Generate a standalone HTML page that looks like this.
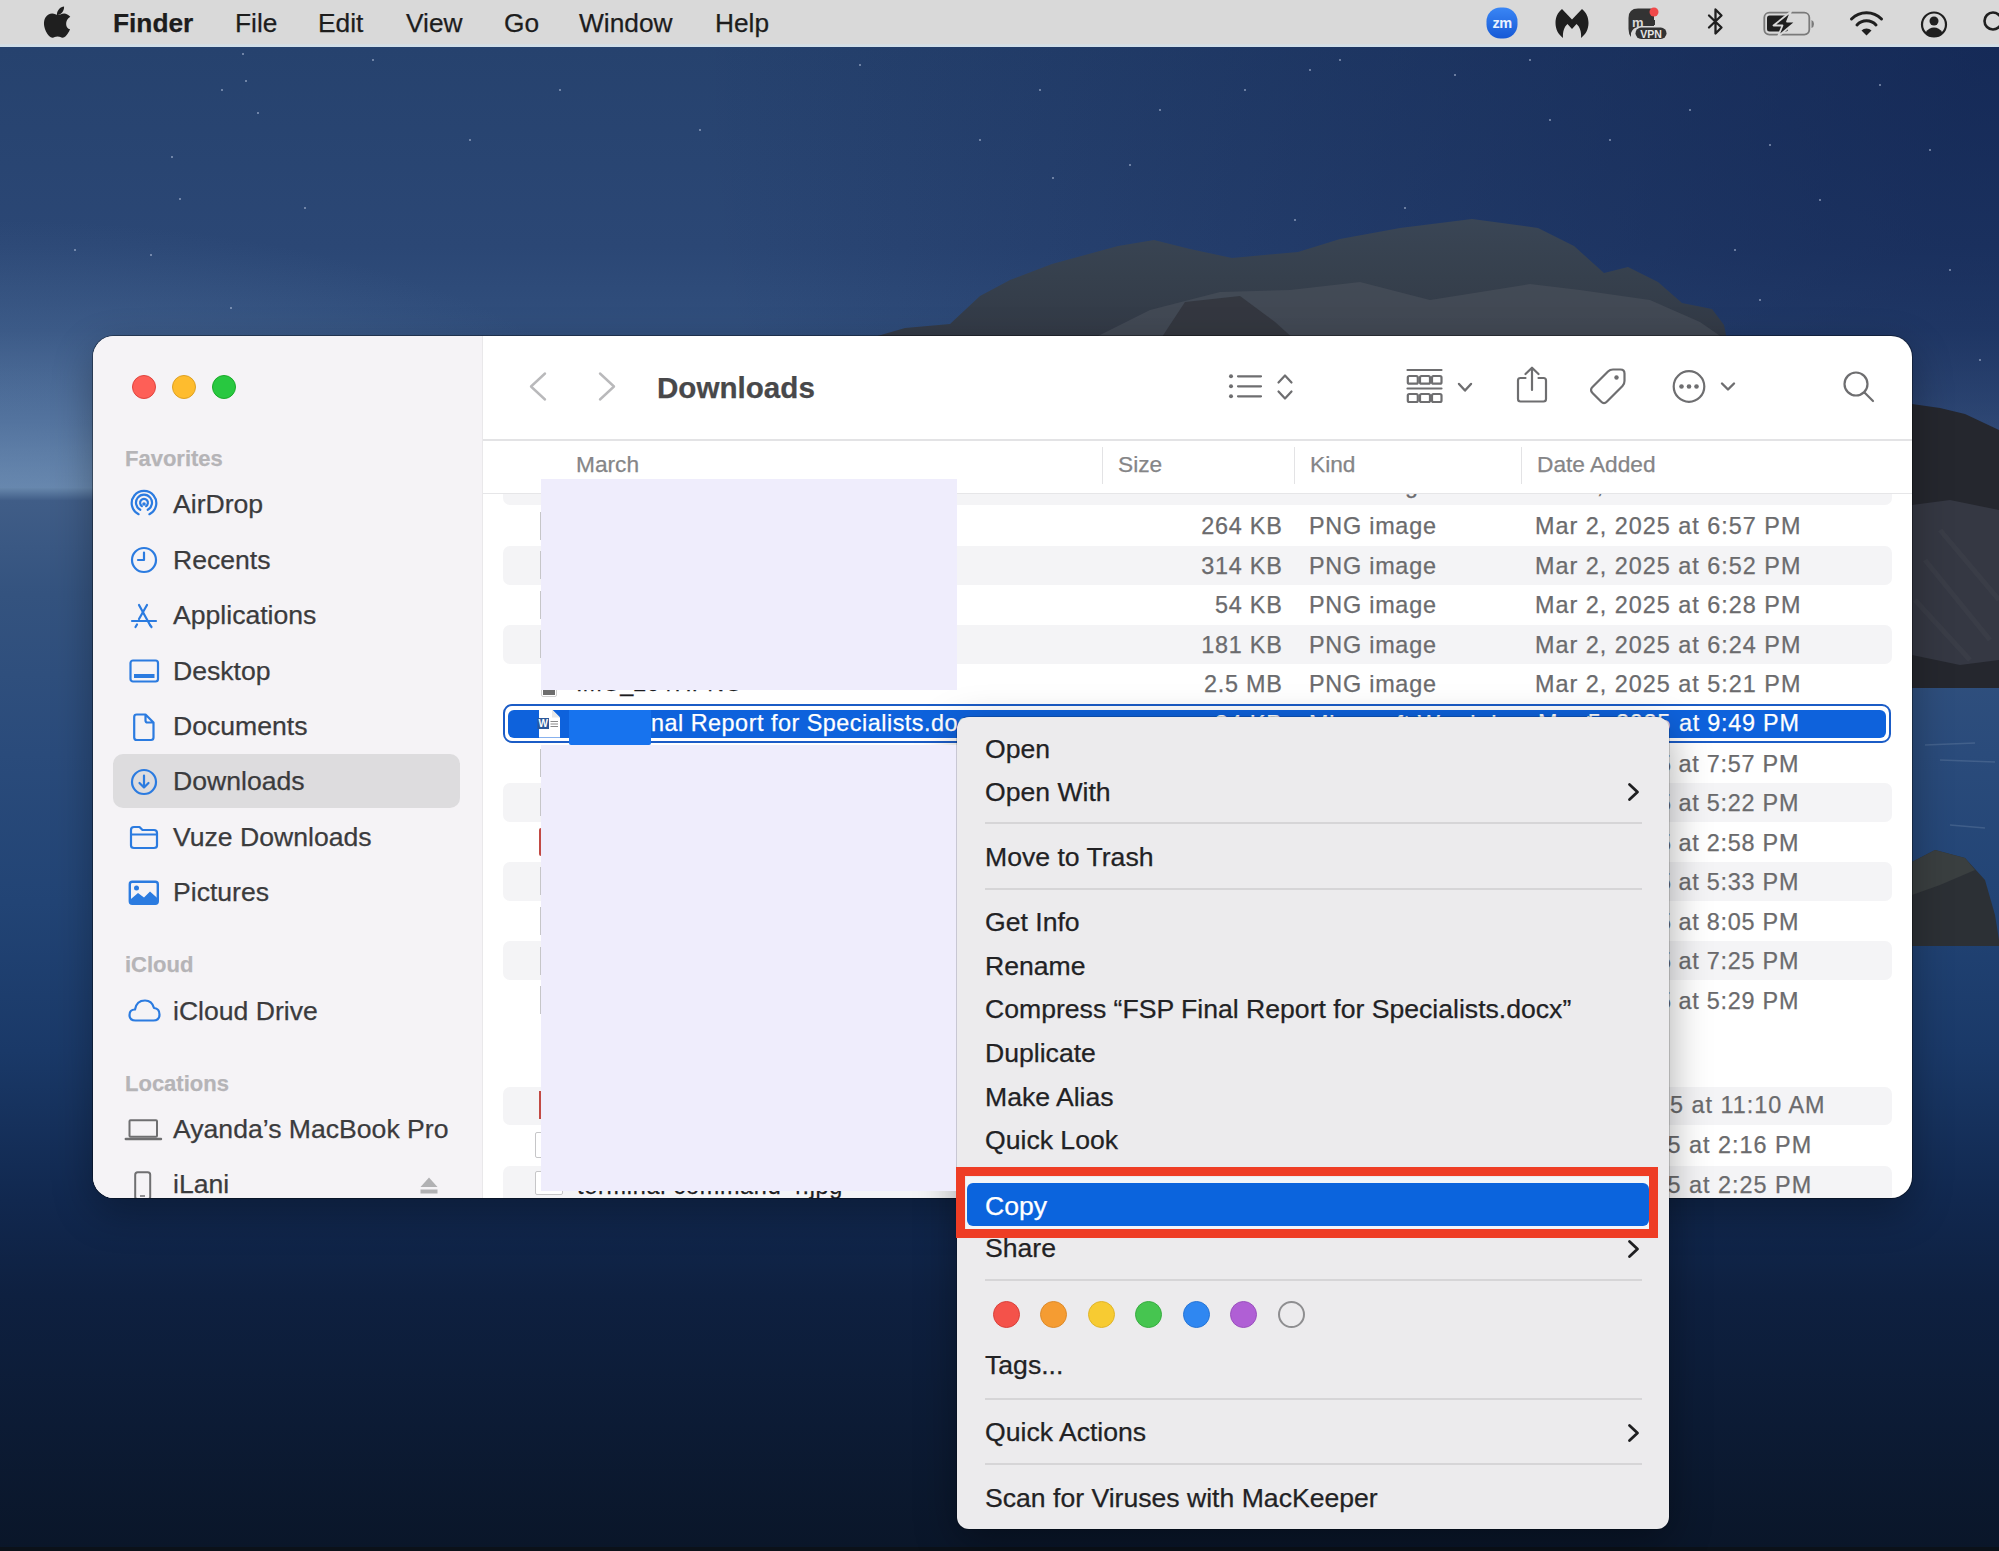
<!DOCTYPE html><html><head><meta charset="utf-8"><style>html,body{margin:0;padding:0}body{width:1999px;height:1551px;overflow:hidden;position:relative;font-family:"Liberation Sans", sans-serif}div{-webkit-text-stroke:0.25px currentColor}</style></head><body>
<svg width="1999" height="1551" style="position:absolute;left:0;top:0">
<defs>
<linearGradient id="sky" x1="0" y1="47" x2="0" y2="490" gradientUnits="userSpaceOnUse">
<stop offset="0" stop-color="#26426e"/><stop offset="0.45" stop-color="#2b4775"/><stop offset="0.64" stop-color="#314f7d"/>
<stop offset="0.85" stop-color="#486894"/><stop offset="1" stop-color="#6686ab"/></linearGradient>
<radialGradient id="skyL" cx="0" cy="480" r="650" gradientUnits="userSpaceOnUse" gradientTransform="translate(0,480) scale(1,0.4) translate(0,-480)"><stop offset="0" stop-color="#6a8ab3" stop-opacity="0.45"/><stop offset="1" stop-color="#6a8ab3" stop-opacity="0"/></radialGradient>
<radialGradient id="skyDark" cx="1999" cy="47" r="1300" gradientUnits="userSpaceOnUse">
<stop offset="0" stop-color="#0a1a48" stop-opacity="0.6"/><stop offset="0.6" stop-color="#0a1a48" stop-opacity="0.25"/><stop offset="1" stop-color="#0a1a48" stop-opacity="0"/></radialGradient>
<linearGradient id="sea" x1="0" y1="488" x2="0" y2="1551" gradientUnits="userSpaceOnUse">
<stop offset="0" stop-color="#6686ab"/><stop offset="0.012" stop-color="#405d87"/><stop offset="0.1" stop-color="#34537f"/>
<stop offset="0.25" stop-color="#2a4b7b"/><stop offset="0.39" stop-color="#224475"/><stop offset="0.53" stop-color="#1a3968"/>
<stop offset="0.67" stop-color="#11284f"/><stop offset="0.76" stop-color="#0e2040"/><stop offset="1" stop-color="#0a1629"/></linearGradient>
<linearGradient id="mtn" x1="0" y1="215" x2="0" y2="340" gradientUnits="userSpaceOnUse">
<stop offset="0" stop-color="#3a4656"/><stop offset="0.5" stop-color="#36404d"/><stop offset="1" stop-color="#323945"/></linearGradient>
<linearGradient id="cliff" x1="0" y1="403" x2="0" y2="690" gradientUnits="userSpaceOnUse">
<stop offset="0" stop-color="#2a2d35"/><stop offset="0.5" stop-color="#363942"/><stop offset="1" stop-color="#26282e"/></linearGradient>
</defs>
<rect x="0" y="0" width="1999" height="490" fill="url(#sky)"/>
<rect x="0" y="0" width="1999" height="490" fill="url(#skyDark)"/>
<rect x="0" y="0" width="1999" height="490" fill="url(#skyL)"/>
<rect x="0" y="488" width="1999" height="1063" fill="url(#sea)"/>
<rect x="0" y="1547" width="1999" height="4" fill="#0b1119"/>
<circle cx="243" cy="54" r="1" fill="#c8d4ea" opacity="0.6"/><circle cx="222" cy="90" r="1" fill="#c8d4ea" opacity="0.6"/><circle cx="246" cy="81" r="1" fill="#c8d4ea" opacity="0.6"/><circle cx="258" cy="113" r="1" fill="#c8d4ea" opacity="0.6"/><circle cx="172" cy="157" r="1" fill="#c8d4ea" opacity="0.6"/><circle cx="180" cy="199" r="1" fill="#c8d4ea" opacity="0.6"/><circle cx="75" cy="250" r="1" fill="#c8d4ea" opacity="0.6"/><circle cx="151" cy="255" r="1" fill="#c8d4ea" opacity="0.6"/><circle cx="373" cy="60" r="1" fill="#c8d4ea" opacity="0.6"/><circle cx="305" cy="208" r="1" fill="#c8d4ea" opacity="0.6"/><circle cx="231" cy="308" r="1" fill="#c8d4ea" opacity="0.6"/><circle cx="1053" cy="178" r="1" fill="#c8d4ea" opacity="0.6"/><circle cx="1160" cy="110" r="1" fill="#c8d4ea" opacity="0.6"/><circle cx="1245" cy="90" r="1" fill="#c8d4ea" opacity="0.6"/><circle cx="1310" cy="70" r="1" fill="#c8d4ea" opacity="0.6"/><circle cx="1455" cy="75" r="1" fill="#c8d4ea" opacity="0.6"/><circle cx="1550" cy="120" r="1" fill="#c8d4ea" opacity="0.6"/><circle cx="1610" cy="140" r="1" fill="#c8d4ea" opacity="0.6"/><circle cx="1690" cy="110" r="1" fill="#c8d4ea" opacity="0.6"/><circle cx="1770" cy="145" r="1" fill="#c8d4ea" opacity="0.6"/><circle cx="1880" cy="85" r="1" fill="#c8d4ea" opacity="0.6"/><circle cx="1930" cy="150" r="1" fill="#c8d4ea" opacity="0.6"/><circle cx="1950" cy="270" r="1" fill="#c8d4ea" opacity="0.6"/><circle cx="1820" cy="200" r="1" fill="#c8d4ea" opacity="0.6"/><circle cx="1735" cy="250" r="1" fill="#c8d4ea" opacity="0.6"/><circle cx="1405" cy="208" r="1" fill="#c8d4ea" opacity="0.6"/><circle cx="1295" cy="220" r="1" fill="#c8d4ea" opacity="0.6"/><circle cx="1340" cy="60" r="1" fill="#c8d4ea" opacity="0.6"/><circle cx="1040" cy="90" r="1" fill="#c8d4ea" opacity="0.6"/><circle cx="980" cy="140" r="1" fill="#c8d4ea" opacity="0.6"/><circle cx="1130" cy="165" r="1" fill="#c8d4ea" opacity="0.6"/><circle cx="1760" cy="300" r="1" fill="#c8d4ea" opacity="0.6"/><circle cx="1980" cy="360" r="1" fill="#c8d4ea" opacity="0.6"/><circle cx="1530" cy="60" r="1" fill="#c8d4ea" opacity="0.6"/><circle cx="860" cy="65" r="1" fill="#c8d4ea" opacity="0.6"/><circle cx="700" cy="130" r="1" fill="#c8d4ea" opacity="0.6"/><circle cx="560" cy="90" r="1" fill="#c8d4ea" opacity="0.6"/><circle cx="470" cy="140" r="1" fill="#c8d4ea" opacity="0.6"/>
<path d="M874,337 L905,328 L950,324 L980,296 L1010,280 L1052,264 L1118,246 L1154,240 L1190,249 L1232,258 L1298,252 L1340,239 L1400,228 L1472,219 L1538,228 L1574,246 L1604,273 L1628,267 L1658,282 L1682,303 L1712,309 L1724,325 L1727,340 Z" fill="url(#mtn)"/>
<path d="M1090,340 L1150,310 L1220,292 L1290,290 L1360,282 L1430,300 L1530,284 L1580,290 L1650,300 L1700,322 L1726,340 Z" fill="#4f565f" opacity="0.5"/>
<path d="M1160,340 L1185,302 L1240,296 L1275,322 L1295,340 Z" fill="#25262c" opacity="0.5"/>
<path d="M1912,404 L1940,408 L1965,414 L1999,430 L1999,688 L1912,688 Z" fill="#25272e"/>
<path d="M1912,505 L1950,500 L1999,510 L1999,660 L1960,665 L1912,655 Z" fill="#353843"/>
<path d="M1925,560 L1990,640 M1915,600 L1970,660 M1940,530 L1999,600" stroke="#41444e" stroke-width="5" opacity="0.45"/>
<path d="M1925,745 L1975,743 M1940,760 L1995,762 M1950,825 L1985,828" stroke="#6f88aa" stroke-width="1.5" opacity="0.35"/>
<path d="M1912,862 L1935,850 L1965,858 L1985,880 L1995,915 L1999,940 L1999,946 L1912,946 Z" fill="#2c3035"/>
<path d="M1912,862 L1935,850 L1965,858 L1975,870 L1940,885 L1912,895 Z" fill="#3a3f40"/>
</svg>
<div style="position:absolute;left:0px;top:0px;width:1999px;height:44px;background:#d9d9d9"></div>
<div style="position:absolute;left:0px;top:44px;width:1999px;height:3px;background:linear-gradient(#d6dde2,#cfdfea)"></div>
<div style="position:absolute;left:113.0px;top:10.2px;font-size:26.3px;line-height:26.3px;color:#1d1d1d;font-weight:700;white-space:nowrap;">Finder</div>
<div style="position:absolute;left:235.0px;top:10.2px;font-size:26.3px;line-height:26.3px;color:#1d1d1d;font-weight:400;white-space:nowrap;">File</div>
<div style="position:absolute;left:318.0px;top:10.2px;font-size:26.3px;line-height:26.3px;color:#1d1d1d;font-weight:400;white-space:nowrap;">Edit</div>
<div style="position:absolute;left:406.0px;top:10.2px;font-size:26.3px;line-height:26.3px;color:#1d1d1d;font-weight:400;white-space:nowrap;">View</div>
<div style="position:absolute;left:504.0px;top:10.2px;font-size:26.3px;line-height:26.3px;color:#1d1d1d;font-weight:400;white-space:nowrap;">Go</div>
<div style="position:absolute;left:579.0px;top:10.2px;font-size:26.3px;line-height:26.3px;color:#1d1d1d;font-weight:400;white-space:nowrap;">Window</div>
<div style="position:absolute;left:715.0px;top:10.2px;font-size:26.3px;line-height:26.3px;color:#1d1d1d;font-weight:400;white-space:nowrap;">Help</div>
<svg style="position:absolute;left:43.5px;top:5.5px;overflow:visible" width="28" height="33" viewBox="0 0 28 33"><path fill="#1f1f1f" d="M19.2,0.5 C19.4,3 18.5,5.2 17.1,6.8 C15.7,8.4 13.6,9.6 11.6,9.4 C11.3,7 12.4,4.7 13.7,3.3 C15.2,1.7 17.4,0.6 19.2,0.5 Z M25.6,24.5 C24.8,26.4 24.4,27.2 23.4,28.7 C22,30.8 20.1,33.3 17.7,33.3 C15.6,33.3 15.1,32 12.2,32 C9.4,32 8.7,33.4 6.6,33.3 C4.2,33.3 2.4,31 1,28.9 C-2.9,23 -3.3,16 -0.8,12.2 C1,9.5 3.8,7.9 6.4,7.9 C9.1,7.9 10.8,9.4 13,9.4 C15.2,9.4 16.5,7.9 19.2,7.9 C21.6,7.9 24.1,9.2 25.9,11.4 C19.5,14.9 20.6,24 25.6,24.5 Z" transform="translate(2.2,0) scale(0.93,0.95)"/></svg>
<svg style="position:absolute;left:1486px;top:7px;overflow:visible" width="32" height="32" viewBox="0 0 32 32"><defs><linearGradient id="zg" x1="0" y1="0" x2="0" y2="1"><stop offset="0" stop-color="#3a86f5"/><stop offset="1" stop-color="#1659d6"/></linearGradient></defs><rect x="0.5" y="0.5" width="31" height="31" rx="14" fill="url(#zg)"/><text x="16" y="21" font-size="14.5" font-weight="700" fill="#eaf2ff" text-anchor="middle" font-family="Liberation Sans" letter-spacing="-0.5">zm</text></svg>
<svg style="position:absolute;left:1555px;top:8px;overflow:visible" width="34" height="32" viewBox="0 0 34 32"><path fill="#1f1f1f" d="M7,1 L17,11.5 L27,1 C31.5,4.5 33.5,9.5 33.5,15 C33.5,21.5 30.5,26.5 26,30 C26.5,24 25,19 21.5,16 L17,21 L12.5,16 C9,19 7.5,24 8,30 C3.5,26.5 0.5,21.5 0.5,15 C0.5,9.5 2.5,4.5 7,1 Z"/></svg>
<svg style="position:absolute;left:1627px;top:7px;overflow:visible" width="42" height="34" viewBox="0 0 42 34"><path fill="#333" d="M11,1.5 H23 Q27,1.5 27,5.5 V20 H12 Q6,20 4,26 V30 Q1.5,27 1.5,22 V11 Q1.5,1.5 11,1.5 Z"/><text x="5" y="20" font-size="13" font-weight="700" fill="#d9d9d9" font-family="Liberation Sans">m</text><rect x="7" y="19" width="34" height="14" rx="7" fill="#d9d9d9"/><rect x="8.5" y="20.5" width="31" height="11.5" rx="5.75" fill="#333"/><text x="24" y="30.5" font-size="10.5" font-weight="700" fill="#e6e6e6" text-anchor="middle" font-family="Liberation Sans">VPN</text><circle cx="27" cy="5" r="4.5" fill="#f0494a"/><rect x="24" y="13" width="4" height="5" fill="#333"/></svg>
<svg style="position:absolute;left:1705px;top:7px;overflow:visible" width="22" height="30" viewBox="0 0 22 30"><path d="M4,8.5 L16.5,20.5 L10.5,26.5 V2.5 L16.5,8.5 L4,20.5" fill="none" stroke="#1f1f1f" stroke-width="2.3" stroke-linecap="round" stroke-linejoin="round"/></svg>
<svg style="position:absolute;left:1762px;top:11px;overflow:visible" width="54" height="26" viewBox="0 0 54 26"><rect x="2.3" y="1.6" width="45" height="22" rx="5" fill="none" stroke="#7a7a7a" stroke-width="1.8"/><rect x="5" y="4.5" width="21" height="16" rx="2.5" fill="#1f1f1f"/><path d="M49.5,9 Q52,10 52,13 Q52,16 49.5,17 Z" fill="#7a7a7a"/><path d="M29,0.5 L11.5,14.5 H20.5 L16,25.5 L34,10.5 H25 Z" fill="#1f1f1f" stroke="#d9d9d9" stroke-width="1.8" stroke-linejoin="round"/></svg>
<svg style="position:absolute;left:1849px;top:10px;overflow:visible" width="35" height="26" viewBox="0 0 35 26"><g fill="none" stroke="#1f1f1f" stroke-width="3" stroke-linecap="round"><path d="M2.5,9 A21,21 0 0 1 32.5,9"/><path d="M8,15 A13,13 0 0 1 27,15"/></g><path d="M12.5,20.5 A7,7 0 0 1 22.5,20.5 L17.5,25.5 Z" fill="#1f1f1f"/></svg>
<svg style="position:absolute;left:1920px;top:11px;overflow:visible" width="28" height="28" viewBox="0 0 28 28"><circle cx="14" cy="13.5" r="12" fill="none" stroke="#1f1f1f" stroke-width="2.2"/><circle cx="14" cy="10" r="4.5" fill="#1f1f1f"/><path d="M5.5,21.5 Q9,16.5 14,16.5 Q19,16.5 22.5,21.5 Q19,25.5 14,25.5 Q9,25.5 5.5,21.5 Z" fill="#1f1f1f"/></svg>
<svg style="position:absolute;left:1982px;top:10px;overflow:visible" width="24" height="26" viewBox="0 0 24 26"><circle cx="11" cy="11" r="8.5" fill="none" stroke="#1f1f1f" stroke-width="2.6"/></svg>
<div style="position:absolute;left:93px;top:336px;width:1819px;height:862px;border-radius:21px;box-shadow:0 0 0 1px rgba(0,0,0,0.35), 0 14px 40px rgba(0,0,0,0.3);background:#fff"></div>
<div style="position:absolute;left:0;top:0;width:1999px;height:1551px;clip-path:inset(336px 87px 353px 93px round 21px)">
<div style="position:absolute;left:93px;top:336px;width:389px;height:862px;background:#f5f3f6"></div>
<div style="position:absolute;left:482px;top:336px;width:1px;height:862px;background:#e9e8ea"></div>
<div style="position:absolute;left:132px;top:375px;width:24px;height:24px;background:#fe5f57;border-radius:50%;box-sizing:border-box;border:1px solid #e0443e"></div>
<div style="position:absolute;left:172px;top:375px;width:24px;height:24px;background:#febc2e;border-radius:50%;box-sizing:border-box;border:1px solid #dea123"></div>
<div style="position:absolute;left:211.5px;top:375px;width:24px;height:24px;background:#28c840;border-radius:50%;box-sizing:border-box;border:1px solid #1aab29"></div>
<div style="position:absolute;left:125.0px;top:447.8px;font-size:22px;line-height:22px;color:#b5b4b7;font-weight:700;white-space:nowrap;">Favorites</div>
<div style="position:absolute;left:125.0px;top:954.2px;font-size:22px;line-height:22px;color:#b5b4b7;font-weight:700;white-space:nowrap;">iCloud</div>
<div style="position:absolute;left:125.0px;top:1072.8px;font-size:22px;line-height:22px;color:#b5b4b7;font-weight:700;white-space:nowrap;">Locations</div>
<div style="position:absolute;left:113px;top:753.6px;width:347px;height:54.5px;background:#dddcde;border-radius:10px"></div>
<div style="position:absolute;left:173.0px;top:491.3px;font-size:26.6px;line-height:26.6px;color:#3b3b3d;font-weight:400;white-space:nowrap;">AirDrop</div>
<div style="position:absolute;left:173.0px;top:546.7px;font-size:26.6px;line-height:26.6px;color:#3b3b3d;font-weight:400;white-space:nowrap;">Recents</div>
<div style="position:absolute;left:173.0px;top:602.1px;font-size:26.6px;line-height:26.6px;color:#3b3b3d;font-weight:400;white-space:nowrap;">Applications</div>
<div style="position:absolute;left:173.0px;top:657.5px;font-size:26.6px;line-height:26.6px;color:#3b3b3d;font-weight:400;white-space:nowrap;">Desktop</div>
<div style="position:absolute;left:173.0px;top:712.9px;font-size:26.6px;line-height:26.6px;color:#3b3b3d;font-weight:400;white-space:nowrap;">Documents</div>
<div style="position:absolute;left:173.0px;top:768.3px;font-size:26.6px;line-height:26.6px;color:#3b3b3d;font-weight:400;white-space:nowrap;">Downloads</div>
<div style="position:absolute;left:173.0px;top:823.7px;font-size:26.6px;line-height:26.6px;color:#3b3b3d;font-weight:400;white-space:nowrap;">Vuze Downloads</div>
<div style="position:absolute;left:173.0px;top:879.1px;font-size:26.6px;line-height:26.6px;color:#3b3b3d;font-weight:400;white-space:nowrap;">Pictures</div>
<div style="position:absolute;left:173.0px;top:997.7px;font-size:26.6px;line-height:26.6px;color:#3b3b3d;font-weight:400;white-space:nowrap;">iCloud Drive</div>
<div style="position:absolute;left:173.0px;top:1116.3px;font-size:26.6px;line-height:26.6px;color:#3b3b3d;font-weight:400;white-space:nowrap;">Ayanda’s MacBook Pro</div>
<div style="position:absolute;left:173.0px;top:1171.1px;font-size:26.6px;line-height:26.6px;color:#3b3b3d;font-weight:400;white-space:nowrap;">iLani</div>
<svg style="position:absolute;left:130px;top:490px;overflow:visible" width="28" height="28" viewBox="0 0 28 28"><g fill="none" stroke="#2b7be0" stroke-width="2.2" stroke-linecap="round" stroke-linejoin="round" stroke-width="1.9"><path d="M8.6,24.2 A12.3,12.3 0 1 1 19.4,24.2"/><path d="M10.3,19.8 A8,8 0 1 1 17.7,19.8"/><path d="M11.9,16.1 A3.9,3.9 0 1 1 16.1,16.1"/></g><circle cx="14" cy="14" r="1.8" fill="#2b7be0"/></svg>
<svg style="position:absolute;left:130px;top:546px;overflow:visible" width="28" height="28" viewBox="0 0 28 28"><g fill="none" stroke="#2b7be0" stroke-width="2.2" stroke-linecap="round" stroke-linejoin="round"><circle cx="14" cy="14" r="12"/><path d="M14,6.5 V14 H8"/></g></svg>
<svg style="position:absolute;left:129px;top:602px;overflow:visible" width="30" height="27" viewBox="0 0 30 27"><g fill="none" stroke="#2b7be0" stroke-width="2.2" stroke-linecap="round" stroke-linejoin="round" stroke-width="2.9"><path d="M10,3 L21,23"/><path d="M18,3 L10,17"/><path d="M3,19 H27"/><path d="M8,22.5 L6.5,25"/><path d="M21,23 L22.5,25"/></g></svg>
<svg style="position:absolute;left:129px;top:659px;overflow:visible" width="31" height="25" viewBox="0 0 31 25"><rect x="1.5" y="1.5" width="27.5" height="21" rx="2.5" fill="none" stroke="#2b7be0" stroke-width="2.2"/><rect x="5" y="15" width="20.5" height="4" fill="#2b7be0"/></svg>
<svg style="position:absolute;left:132px;top:713px;overflow:visible" width="24" height="29" viewBox="0 0 24 29"><path d="M2.2,4 Q2.2,1.5 4.7,1.5 H13.5 L21.5,9.5 V24.5 Q21.5,27 19,27 H4.7 Q2.2,27 2.2,24.5 Z M13.5,1.5 V7.5 Q13.5,9.5 15.5,9.5 H21.5" fill="none" stroke="#2b7be0" stroke-width="2.2" stroke-linecap="round" stroke-linejoin="round"/></svg>
<svg style="position:absolute;left:130px;top:767.5px;overflow:visible" width="28" height="28" viewBox="0 0 28 28"><g fill="none" stroke="#2b7be0" stroke-width="2.2" stroke-linecap="round" stroke-linejoin="round"><circle cx="14" cy="14" r="12"/><path d="M14,7.5 V19.5 M9.5,15 L14,19.5 L18.5,15"/></g></svg>
<svg style="position:absolute;left:129px;top:825px;overflow:visible" width="30" height="25" viewBox="0 0 30 25"><path d="M2,5 Q2,2 5,2 H10.5 L13.5,5 H25 Q28,5 28,8 V20.5 Q28,23 25,23 H5 Q2,23 2,20.5 Z M2,9.5 H28" fill="none" stroke="#2b7be0" stroke-width="2.2" stroke-linecap="round" stroke-linejoin="round"/></svg>
<svg style="position:absolute;left:128px;top:880px;overflow:visible" width="32" height="26" viewBox="0 0 32 26"><rect x="1.8" y="1.8" width="28" height="22" rx="2.5" fill="none" stroke="#2b7be0" stroke-width="2.4"/><path d="M1.8,20 L10,13 L16,17.5 L22,11.5 L29.8,18.5 V24 H1.8 Z" fill="#2b7be0"/><circle cx="8.5" cy="8" r="2.5" fill="#2b7be0"/></svg>
<svg style="position:absolute;left:128px;top:998px;overflow:visible" width="33" height="25" viewBox="0 0 33 25"><path d="M7.5,22.5 Q1.5,22.5 1.5,17 Q1.5,11.5 7,11.5 Q8.5,2.5 17,2.5 Q24,2.5 26,10 Q31.5,10.5 31.5,16.5 Q31.5,22.5 25.5,22.5 Z" fill="none" stroke="#2b7be0" stroke-width="2.2" stroke-linecap="round" stroke-linejoin="round"/></svg>
<svg style="position:absolute;left:125px;top:1119px;overflow:visible" width="37" height="22" viewBox="0 0 37 22"><rect x="4.5" y="1.2" width="27.5" height="16.5" rx="1" fill="none" stroke="#6f6f71" stroke-width="2"/><path d="M0.8,20 H36" stroke="#6f6f71" stroke-width="2.4" stroke-linecap="round"/></svg>
<svg style="position:absolute;left:134px;top:1171px;overflow:visible" width="18" height="30" viewBox="0 0 18 30"><rect x="1.2" y="1.2" width="15" height="27" rx="2.5" fill="none" stroke="#6f6f71" stroke-width="2"/><path d="M6,25 H11" stroke="#6f6f71" stroke-width="1.5"/></svg>
<svg style="position:absolute;left:419px;top:1176px;overflow:visible" width="20" height="20" viewBox="0 0 20 20"><path d="M10,1.5 L18.5,11 H1.5 Z" fill="#b1b1b3"/><rect x="1.5" y="13.5" width="17" height="4" fill="#b1b1b3"/></svg>
<div style="position:absolute;left:483px;top:439px;width:1429px;height:1.5px;background:#e3e3e5"></div>
<div style="position:absolute;left:483px;top:492.5px;width:1429px;height:1.5px;background:#e6e6e8"></div>
<div style="position:absolute;left:1101.5px;top:447px;width:1.5px;height:37px;background:#e3e3e5"></div>
<div style="position:absolute;left:1293.5px;top:447px;width:1.5px;height:37px;background:#e3e3e5"></div>
<div style="position:absolute;left:1520.5px;top:447px;width:1.5px;height:37px;background:#e3e3e5"></div>
<svg style="position:absolute;left:526px;top:371px;overflow:visible" width="24" height="32" viewBox="0 0 24 32"><path d="M19,2.5 L5,15.5 L19,28.5" fill="none" stroke="#b9b9bb" stroke-width="2.4" stroke-linecap="round" stroke-linejoin="round"/></svg>
<svg style="position:absolute;left:595px;top:371px;overflow:visible" width="24" height="32" viewBox="0 0 24 32"><path d="M5,2.5 L19,15.5 L5,28.5" fill="none" stroke="#b9b9bb" stroke-width="2.4" stroke-linecap="round" stroke-linejoin="round"/></svg>
<div style="position:absolute;left:657.0px;top:373.2px;font-size:29.6px;line-height:29.6px;color:#48484a;font-weight:700;white-space:nowrap;">Downloads</div>
<svg style="position:absolute;left:1225px;top:368px;overflow:visible" width="70" height="36" viewBox="0 0 70 36"><g fill="#6e6e70"><circle cx="6" cy="8.3" r="2"/><circle cx="6" cy="18.3" r="2"/><circle cx="6" cy="28.3" r="2"/></g><g fill="none" stroke="#6e6e70" stroke-width="2.2" stroke-linecap="round" stroke-linejoin="round"><path d="M13,8.3 H36 M13,18.3 H36 M13,28.3 H36"/><path d="M53.5,14.5 L60,7.5 L66.5,14.5 M53.5,23.5 L60,30.5 L66.5,23.5"/></g></svg>
<svg style="position:absolute;left:1404px;top:367px;overflow:visible" width="72" height="38" viewBox="0 0 72 38"><g fill="none" stroke="#6e6e70" stroke-width="2.2" stroke-linecap="round" stroke-linejoin="round" stroke-width="2"><path d="M3.5,3 H37.5 M3.5,21.5 H37.5"/><rect x="3.8" y="9" width="10" height="7.7" rx="1.5"/><rect x="16" y="9" width="10" height="7.7" rx="1.5"/><rect x="28" y="9" width="9.5" height="7.7" rx="1.5"/><rect x="3.8" y="27" width="10" height="8" rx="1.5"/><rect x="16" y="27" width="10" height="8" rx="1.5"/><rect x="28" y="27" width="9.5" height="8" rx="1.5"/><path d="M55,17 L61,23.5 L67,17" stroke-width="2.4"/></g></svg>
<svg style="position:absolute;left:1515px;top:365px;overflow:visible" width="34" height="40" viewBox="0 0 34 40"><g fill="none" stroke="#6e6e70" stroke-width="2.2" stroke-linecap="round" stroke-linejoin="round"><path d="M10.5,13 H5.5 Q3,13 3,15.5 V34 Q3,36.5 5.5,36.5 H28.5 Q31,36.5 31,34 V15.5 Q31,13 28.5,13 H23.5"/><path d="M17,25 V3 M10.5,9 L17,2.7 L23.5,9"/></g></svg>
<svg style="position:absolute;left:1586px;top:366px;overflow:visible" width="42" height="42" viewBox="0 0 42 42"><g fill="none" stroke="#6e6e70" stroke-width="2.2" stroke-linecap="round" stroke-linejoin="round"><path d="M22,5.5 Q24,3.5 27,3.5 H34.5 Q38.5,3.5 38.5,7.5 V15 Q38.5,18 36.5,20 L21,35.5 Q18,38.5 15,35.5 L6.5,27 Q3.5,24 6.5,21 Z"/></g><circle cx="30.5" cy="11.5" r="2.2" fill="#6e6e70"/></svg>
<svg style="position:absolute;left:1670px;top:368px;overflow:visible" width="72" height="38" viewBox="0 0 72 38"><g fill="none" stroke="#6e6e70" stroke-width="2.2" stroke-linecap="round" stroke-linejoin="round"><circle cx="19" cy="18.5" r="15.3"/><path d="M52,15.5 L58,21.5 L64,15.5" stroke-width="2.4"/></g><g fill="#6e6e70"><circle cx="11.5" cy="18.5" r="2.3"/><circle cx="19" cy="18.5" r="2.3"/><circle cx="26.5" cy="18.5" r="2.3"/></g></svg>
<svg style="position:absolute;left:1840px;top:368px;overflow:visible" width="38" height="38" viewBox="0 0 38 38"><g fill="none" stroke="#6e6e70" stroke-width="2.2" stroke-linecap="round" stroke-linejoin="round" stroke-width="2.6"><circle cx="16" cy="16" r="11.5"/><path d="M24.5,24.5 L33,33"/></g></svg>
<div style="position:absolute;left:576.0px;top:453.4px;font-size:22.7px;line-height:22.7px;color:#858587;font-weight:400;white-space:nowrap;">March</div>
<div style="position:absolute;left:1118.0px;top:453.4px;font-size:22.7px;line-height:22.7px;color:#858587;font-weight:400;white-space:nowrap;">Size</div>
<div style="position:absolute;left:1310.0px;top:453.4px;font-size:22.7px;line-height:22.7px;color:#858587;font-weight:400;white-space:nowrap;">Kind</div>
<div style="position:absolute;left:1537.0px;top:453.4px;font-size:22.7px;line-height:22.7px;color:#858587;font-weight:400;white-space:nowrap;">Date Added</div>
<div style="position:absolute;left:502.5px;top:494px;width:1389.5px;height:11px;background:#f4f4f6;border-radius:0 0 7px 7px"></div>
<div style="position:absolute;right:716.5px;top:515.2px;font-size:23.4px;line-height:23.4px;color:#6b6b6d;font-weight:400;white-space:nowrap;text-align:right;letter-spacing:0.75px">264 KB</div>
<div style="position:absolute;left:1309.0px;top:515.2px;font-size:23.4px;line-height:23.4px;color:#6b6b6d;font-weight:400;white-space:nowrap;letter-spacing:0.75px">PNG image</div>
<div style="position:absolute;left:1535.0px;top:515.2px;font-size:23.4px;line-height:23.4px;color:#6b6b6d;font-weight:400;white-space:nowrap;letter-spacing:1px">Mar 2, 2025 at 6:57 PM</div>
<div style="position:absolute;left:502.5px;top:545.55px;width:1389.5px;height:39px;background:#f4f4f6;border-radius:7px"></div>
<div style="position:absolute;right:716.5px;top:554.7px;font-size:23.4px;line-height:23.4px;color:#6b6b6d;font-weight:400;white-space:nowrap;text-align:right;letter-spacing:0.75px">314 KB</div>
<div style="position:absolute;left:1309.0px;top:554.7px;font-size:23.4px;line-height:23.4px;color:#6b6b6d;font-weight:400;white-space:nowrap;letter-spacing:0.75px">PNG image</div>
<div style="position:absolute;left:1535.0px;top:554.7px;font-size:23.4px;line-height:23.4px;color:#6b6b6d;font-weight:400;white-space:nowrap;letter-spacing:1px">Mar 2, 2025 at 6:52 PM</div>
<div style="position:absolute;right:716.5px;top:594.3px;font-size:23.4px;line-height:23.4px;color:#6b6b6d;font-weight:400;white-space:nowrap;text-align:right;letter-spacing:0.75px">54 KB</div>
<div style="position:absolute;left:1309.0px;top:594.3px;font-size:23.4px;line-height:23.4px;color:#6b6b6d;font-weight:400;white-space:nowrap;letter-spacing:0.75px">PNG image</div>
<div style="position:absolute;left:1535.0px;top:594.3px;font-size:23.4px;line-height:23.4px;color:#6b6b6d;font-weight:400;white-space:nowrap;letter-spacing:1px">Mar 2, 2025 at 6:28 PM</div>
<div style="position:absolute;left:502.5px;top:624.65px;width:1389.5px;height:39px;background:#f4f4f6;border-radius:7px"></div>
<div style="position:absolute;right:716.5px;top:633.8px;font-size:23.4px;line-height:23.4px;color:#6b6b6d;font-weight:400;white-space:nowrap;text-align:right;letter-spacing:0.75px">181 KB</div>
<div style="position:absolute;left:1309.0px;top:633.8px;font-size:23.4px;line-height:23.4px;color:#6b6b6d;font-weight:400;white-space:nowrap;letter-spacing:0.75px">PNG image</div>
<div style="position:absolute;left:1535.0px;top:633.8px;font-size:23.4px;line-height:23.4px;color:#6b6b6d;font-weight:400;white-space:nowrap;letter-spacing:1px">Mar 2, 2025 at 6:24 PM</div>
<div style="position:absolute;right:716.5px;top:673.4px;font-size:23.4px;line-height:23.4px;color:#6b6b6d;font-weight:400;white-space:nowrap;text-align:right;letter-spacing:0.75px">2.5 MB</div>
<div style="position:absolute;left:1309.0px;top:673.4px;font-size:23.4px;line-height:23.4px;color:#6b6b6d;font-weight:400;white-space:nowrap;letter-spacing:0.75px">PNG image</div>
<div style="position:absolute;left:1535.0px;top:673.4px;font-size:23.4px;line-height:23.4px;color:#6b6b6d;font-weight:400;white-space:nowrap;letter-spacing:1px">Mar 2, 2025 at 5:21 PM</div>
<div style="position:absolute;left:0;top:494px;width:1999px;height:12px;overflow:hidden"><div style="position:absolute;left:0;top:-494px;width:1999px;height:1551px"><div style="position:absolute;left:1310.0px;top:474.4px;font-size:23.4px;line-height:23.4px;color:#6b6b6d;font-weight:400;white-space:nowrap;">PNG image</div>
<div style="position:absolute;left:1537.0px;top:474.4px;font-size:23.4px;line-height:23.4px;color:#6b6b6d;font-weight:400;white-space:nowrap;">Mar 2, 2025 at 7:02 PM</div>
<div style="position:absolute;right:718.0px;top:474.4px;font-size:23.4px;line-height:23.4px;color:#6b6b6d;font-weight:400;white-space:nowrap;text-align:right;">233 KB</div>
</div></div>
<div style="position:absolute;left:576.0px;top:672.1px;font-size:23.4px;line-height:23.4px;color:#1d1d1f;font-weight:400;white-space:nowrap;">IMG_2647.PNG</div>
<div style="position:absolute;left:541px;top:683px;width:16px;height:14px;background:#fff;border:1px solid #d0d0d0;border-radius:2px;box-sizing:border-box"></div>
<div style="position:absolute;left:543px;top:689px;width:12px;height:6px;background:#6d6d6d"></div>
<div style="position:absolute;left:1678.5px;top:752.5px;font-size:23.4px;line-height:23.4px;color:#6b6b6d;font-weight:400;white-space:nowrap;letter-spacing:0.75px">at 7:57 PM</div>
<div style="position:absolute;right:328.0px;top:752.5px;font-size:23.4px;line-height:23.4px;color:#6b6b6d;font-weight:400;white-space:nowrap;text-align:right;">5</div>
<div style="position:absolute;left:502.5px;top:782.8499999999999px;width:1389.5px;height:39px;background:#f4f4f6;border-radius:7px"></div>
<div style="position:absolute;left:1678.5px;top:792.0px;font-size:23.4px;line-height:23.4px;color:#6b6b6d;font-weight:400;white-space:nowrap;letter-spacing:0.75px">at 5:22 PM</div>
<div style="position:absolute;right:328.0px;top:792.0px;font-size:23.4px;line-height:23.4px;color:#6b6b6d;font-weight:400;white-space:nowrap;text-align:right;">5</div>
<div style="position:absolute;left:1678.5px;top:831.6px;font-size:23.4px;line-height:23.4px;color:#6b6b6d;font-weight:400;white-space:nowrap;letter-spacing:0.75px">at 2:58 PM</div>
<div style="position:absolute;right:328.0px;top:831.6px;font-size:23.4px;line-height:23.4px;color:#6b6b6d;font-weight:400;white-space:nowrap;text-align:right;">5</div>
<div style="position:absolute;left:502.5px;top:861.95px;width:1389.5px;height:39px;background:#f4f4f6;border-radius:7px"></div>
<div style="position:absolute;left:1678.5px;top:871.1px;font-size:23.4px;line-height:23.4px;color:#6b6b6d;font-weight:400;white-space:nowrap;letter-spacing:0.75px">at 5:33 PM</div>
<div style="position:absolute;right:328.0px;top:871.1px;font-size:23.4px;line-height:23.4px;color:#6b6b6d;font-weight:400;white-space:nowrap;text-align:right;">5</div>
<div style="position:absolute;left:1678.5px;top:910.7px;font-size:23.4px;line-height:23.4px;color:#6b6b6d;font-weight:400;white-space:nowrap;letter-spacing:0.75px">at 8:05 PM</div>
<div style="position:absolute;right:328.0px;top:910.7px;font-size:23.4px;line-height:23.4px;color:#6b6b6d;font-weight:400;white-space:nowrap;text-align:right;">5</div>
<div style="position:absolute;left:502.5px;top:941.05px;width:1389.5px;height:39px;background:#f4f4f6;border-radius:7px"></div>
<div style="position:absolute;left:1678.5px;top:950.2px;font-size:23.4px;line-height:23.4px;color:#6b6b6d;font-weight:400;white-space:nowrap;letter-spacing:0.75px">at 7:25 PM</div>
<div style="position:absolute;right:328.0px;top:950.2px;font-size:23.4px;line-height:23.4px;color:#6b6b6d;font-weight:400;white-space:nowrap;text-align:right;">5</div>
<div style="position:absolute;left:1678.5px;top:989.8px;font-size:23.4px;line-height:23.4px;color:#6b6b6d;font-weight:400;white-space:nowrap;letter-spacing:0.75px">at 5:29 PM</div>
<div style="position:absolute;right:328.0px;top:989.8px;font-size:23.4px;line-height:23.4px;color:#6b6b6d;font-weight:400;white-space:nowrap;text-align:right;">5</div>
<div style="position:absolute;left:502.5px;top:1086.6px;width:1389.5px;height:38px;background:#f4f4f6;border-radius:7px"></div>
<div style="position:absolute;left:1670.0px;top:1094.3px;font-size:23.4px;line-height:23.4px;color:#6b6b6d;font-weight:400;white-space:nowrap;letter-spacing:1px">5 at 11:10 AM</div>
<div style="position:absolute;left:1667.5px;top:1133.7px;font-size:23.4px;line-height:23.4px;color:#6b6b6d;font-weight:400;white-space:nowrap;letter-spacing:1px">5 at 2:16 PM</div>
<div style="position:absolute;left:502.5px;top:1166px;width:1389.5px;height:38px;background:#f4f4f6;border-radius:7px"></div>
<div style="position:absolute;left:1667.5px;top:1173.7px;font-size:23.4px;line-height:23.4px;color:#6b6b6d;font-weight:400;white-space:nowrap;letter-spacing:1px">5 at 2:25 PM</div>
<div style="position:absolute;left:577.0px;top:1175.2px;font-size:23.4px;line-height:23.4px;color:#1d1d1f;font-weight:400;white-space:nowrap;letter-spacing:0.75px">terminal command 4.jpg</div>
<div style="position:absolute;left:539.5px;top:511.5px;width:1.5px;height:28px;background:#c6c6c8"></div>
<div style="position:absolute;left:539.5px;top:551.05px;width:1.5px;height:28px;background:#c6c6c8"></div>
<div style="position:absolute;left:539.5px;top:590.6px;width:1.5px;height:28px;background:#c6c6c8"></div>
<div style="position:absolute;left:539.5px;top:630.15px;width:1.5px;height:28px;background:#c6c6c8"></div>
<div style="position:absolute;left:539.5px;top:748.8px;width:1.5px;height:28px;background:#c6c6c8"></div>
<div style="position:absolute;left:539.5px;top:788.3499999999999px;width:1.5px;height:28px;background:#c6c6c8"></div>
<div style="position:absolute;left:539.5px;top:867.45px;width:1.5px;height:28px;background:#c6c6c8"></div>
<div style="position:absolute;left:539.5px;top:907.0px;width:1.5px;height:28px;background:#c6c6c8"></div>
<div style="position:absolute;left:539.5px;top:946.55px;width:1.5px;height:28px;background:#c6c6c8"></div>
<div style="position:absolute;left:539.5px;top:986.0999999999999px;width:1.5px;height:28px;background:#c6c6c8"></div>
<div style="position:absolute;left:538.5px;top:827.9px;width:2.5px;height:28px;background:#c24a44;border-radius:2px 0 0 2px"></div>
<div style="position:absolute;left:538.5px;top:1091px;width:2.5px;height:28px;background:#c24a44"></div>
<div style="position:absolute;left:535px;top:1132px;width:6px;height:24px;background:#fff;border:1.5px solid #c6c6c8;border-radius:2px"></div>
<div style="position:absolute;left:535px;top:1171px;width:28px;height:24px;background:#fff;border:1.5px solid #c6c6c8;border-radius:2px;box-sizing:border-box"></div>
<div style="position:absolute;left:503px;top:704px;width:1388px;height:39px;border:2.2px solid #1b5cc6;border-radius:9px;box-sizing:border-box;background:#fff"></div>
<div style="position:absolute;left:508px;top:709.5px;width:1378px;height:28px;background:#0e62dc;border-radius:6px"></div>
<div style="position:absolute;right:1348.0px;top:712.2px;font-size:23.4px;line-height:23.4px;color:#ffffff;font-weight:400;white-space:nowrap;text-align:right;letter-spacing:0.75px">FSP Fi</div>
<div style="position:absolute;left:651.0px;top:712.2px;font-size:23.4px;line-height:23.4px;color:#ffffff;font-weight:400;white-space:nowrap;letter-spacing:0.5px">nal Report for Specialists.docx</div>
<div style="position:absolute;right:716.5px;top:713.0px;font-size:23.4px;line-height:23.4px;color:#ffffff;font-weight:400;white-space:nowrap;text-align:right;letter-spacing:0.75px">34 KB</div>
<div style="position:absolute;left:1309.0px;top:713.0px;font-size:23.4px;line-height:23.4px;color:#ffffff;font-weight:400;white-space:nowrap;letter-spacing:0.75px">Microsoft Word document</div>
<div style="position:absolute;right:328.0px;top:712.2px;font-size:23.4px;line-height:23.4px;color:#ffffff;font-weight:400;white-space:nowrap;text-align:right;letter-spacing:0.75px">Mar 5, 2025</div>
<div style="position:absolute;left:1679.0px;top:712.2px;font-size:23.4px;line-height:23.4px;color:#ffffff;font-weight:400;white-space:nowrap;letter-spacing:0.75px">at 9:49 PM</div>
<svg style="position:absolute;left:537px;top:709px;overflow:visible" width="26" height="30" viewBox="0 0 26 30"><path d="M2,0.5 H15 L23,8.5 V28.5 H2 Z" fill="#fff"/><path d="M15,0.5 V8.5 H23" fill="#e8e8e8"/><rect x="0.5" y="9" width="11.5" height="11" fill="#2b579a"/><text x="6.2" y="18" font-size="10" font-weight="700" fill="#fff" text-anchor="middle" font-family="Liberation Sans">W</text><path d="M13.5,12.5 H21 M13.5,15 H21 M13.5,17.5 H21" stroke="#8a8a8a" stroke-width="1"/></svg>
</div>
<div style="position:absolute;left:957px;top:716.5px;width:712px;height:812.0px;border-radius:12px;box-shadow:0 12px 40px rgba(0,0,0,0.35)"></div>
<div style="position:absolute;left:541px;top:479px;width:416px;height:211px;background:#efedfc"></div>
<div style="position:absolute;left:541px;top:745px;width:416px;height:446px;background:#efedfc"></div>
<div style="position:absolute;left:569px;top:710px;width:82px;height:35px;background:#1773ee;border-radius:0 0 2px 2px"></div>
<div style="position:absolute;left:957px;top:716.5px;width:712px;height:812.0px;background:#ecebed;border-radius:12px;box-shadow:0 0 0 1px rgba(0,0,0,0.16)"></div>
<div style="position:absolute;left:985.0px;top:735.5px;font-size:26.6px;line-height:26.6px;color:#222224;font-weight:400;white-space:nowrap;">Open</div>
<div style="position:absolute;left:985.0px;top:779.1px;font-size:26.6px;line-height:26.6px;color:#222224;font-weight:400;white-space:nowrap;">Open With</div>
<div style="position:absolute;left:985.0px;top:843.9px;font-size:26.6px;line-height:26.6px;color:#222224;font-weight:400;white-space:nowrap;">Move to Trash</div>
<div style="position:absolute;left:985.0px;top:909.3px;font-size:26.6px;line-height:26.6px;color:#222224;font-weight:400;white-space:nowrap;">Get Info</div>
<div style="position:absolute;left:985.0px;top:952.7px;font-size:26.6px;line-height:26.6px;color:#222224;font-weight:400;white-space:nowrap;">Rename</div>
<div style="position:absolute;left:985.0px;top:996.3px;font-size:26.6px;line-height:26.6px;color:#222224;font-weight:400;white-space:nowrap;">Compress “FSP Final Report for Specialists.docx”</div>
<div style="position:absolute;left:985.0px;top:1039.9px;font-size:26.6px;line-height:26.6px;color:#222224;font-weight:400;white-space:nowrap;">Duplicate</div>
<div style="position:absolute;left:985.0px;top:1083.6px;font-size:26.6px;line-height:26.6px;color:#222224;font-weight:400;white-space:nowrap;">Make Alias</div>
<div style="position:absolute;left:985.0px;top:1127.2px;font-size:26.6px;line-height:26.6px;color:#222224;font-weight:400;white-space:nowrap;">Quick Look</div>
<div style="position:absolute;left:985.0px;top:1235.0px;font-size:26.6px;line-height:26.6px;color:#222224;font-weight:400;white-space:nowrap;">Share</div>
<div style="position:absolute;left:985.0px;top:1352.0px;font-size:26.6px;line-height:26.6px;color:#222224;font-weight:400;white-space:nowrap;">Tags...</div>
<div style="position:absolute;left:985.0px;top:1419.0px;font-size:26.6px;line-height:26.6px;color:#222224;font-weight:400;white-space:nowrap;">Quick Actions</div>
<div style="position:absolute;left:985.0px;top:1485.0px;font-size:26.6px;line-height:26.6px;color:#222224;font-weight:400;white-space:nowrap;">Scan for Viruses with MacKeeper</div>
<div style="position:absolute;left:985px;top:822.4px;width:656.5px;height:2px;background:#d6d5d7"></div>
<div style="position:absolute;left:985px;top:887.6px;width:656.5px;height:2px;background:#d6d5d7"></div>
<div style="position:absolute;left:985px;top:1170.5px;width:656.5px;height:2px;background:#d6d5d7"></div>
<div style="position:absolute;left:985px;top:1279.3px;width:656.5px;height:2px;background:#d6d5d7"></div>
<div style="position:absolute;left:985px;top:1397.7px;width:656.5px;height:2px;background:#d6d5d7"></div>
<div style="position:absolute;left:985px;top:1462.7px;width:656.5px;height:2px;background:#d6d5d7"></div>
<svg style="position:absolute;left:1626px;top:782px;overflow:visible" width="16" height="20" viewBox="0 0 16 20"><path d="M3.5,2.5 L11.5,10 L3.5,17.5" fill="none" stroke="#1f1f21" stroke-width="2.8" stroke-linecap="round" stroke-linejoin="round"/></svg>
<svg style="position:absolute;left:1626px;top:1239.3px;overflow:visible" width="16" height="20" viewBox="0 0 16 20"><path d="M3.5,2.5 L11.5,10 L3.5,17.5" fill="none" stroke="#1f1f21" stroke-width="2.8" stroke-linecap="round" stroke-linejoin="round"/></svg>
<svg style="position:absolute;left:1626px;top:1422.5px;overflow:visible" width="16" height="20" viewBox="0 0 16 20"><path d="M3.5,2.5 L11.5,10 L3.5,17.5" fill="none" stroke="#1f1f21" stroke-width="2.8" stroke-linecap="round" stroke-linejoin="round"/></svg>
<div style="position:absolute;left:965.5px;top:1176.5px;width:683px;height:52px;background:#f3f5f8"></div>
<div style="position:absolute;left:967px;top:1182.5px;width:681.5px;height:43.5px;background:#0b64dd;border-radius:6px"></div>
<div style="position:absolute;left:985.0px;top:1192.5px;font-size:26.6px;line-height:26.6px;color:#ffffff;font-weight:400;white-space:nowrap;">Copy</div>
<div style="position:absolute;left:992.5px;top:1301.0px;width:27px;height:27px;background:#f4524a;border-radius:50%;box-sizing:border-box;border:1.2px solid #d9403a"></div>
<div style="position:absolute;left:1040.0px;top:1301.0px;width:27px;height:27px;background:#f59c32;border-radius:50%;box-sizing:border-box;border:1.2px solid #dd8a2a"></div>
<div style="position:absolute;left:1087.5px;top:1301.0px;width:27px;height:27px;background:#f7cb32;border-radius:50%;box-sizing:border-box;border:1.2px solid #e0b52a"></div>
<div style="position:absolute;left:1135.0px;top:1301.0px;width:27px;height:27px;background:#46c550;border-radius:50%;box-sizing:border-box;border:1.2px solid #37ad40"></div>
<div style="position:absolute;left:1182.5px;top:1301.0px;width:27px;height:27px;background:#2f87f1;border-radius:50%;box-sizing:border-box;border:1.2px solid #2574d6"></div>
<div style="position:absolute;left:1230.0px;top:1301.0px;width:27px;height:27px;background:#b05fd5;border-radius:50%;box-sizing:border-box;border:1.2px solid #9a50bd"></div>
<div style="position:absolute;left:1277.5px;top:1301.0px;width:27px;height:27px;border-radius:50%;box-sizing:border-box;border:2px solid #8e8e90"></div>
<div style="position:absolute;left:956px;top:1167px;width:702px;height:71px;border:9.5px solid #ee3d25;box-sizing:border-box"></div>
</body></html>
